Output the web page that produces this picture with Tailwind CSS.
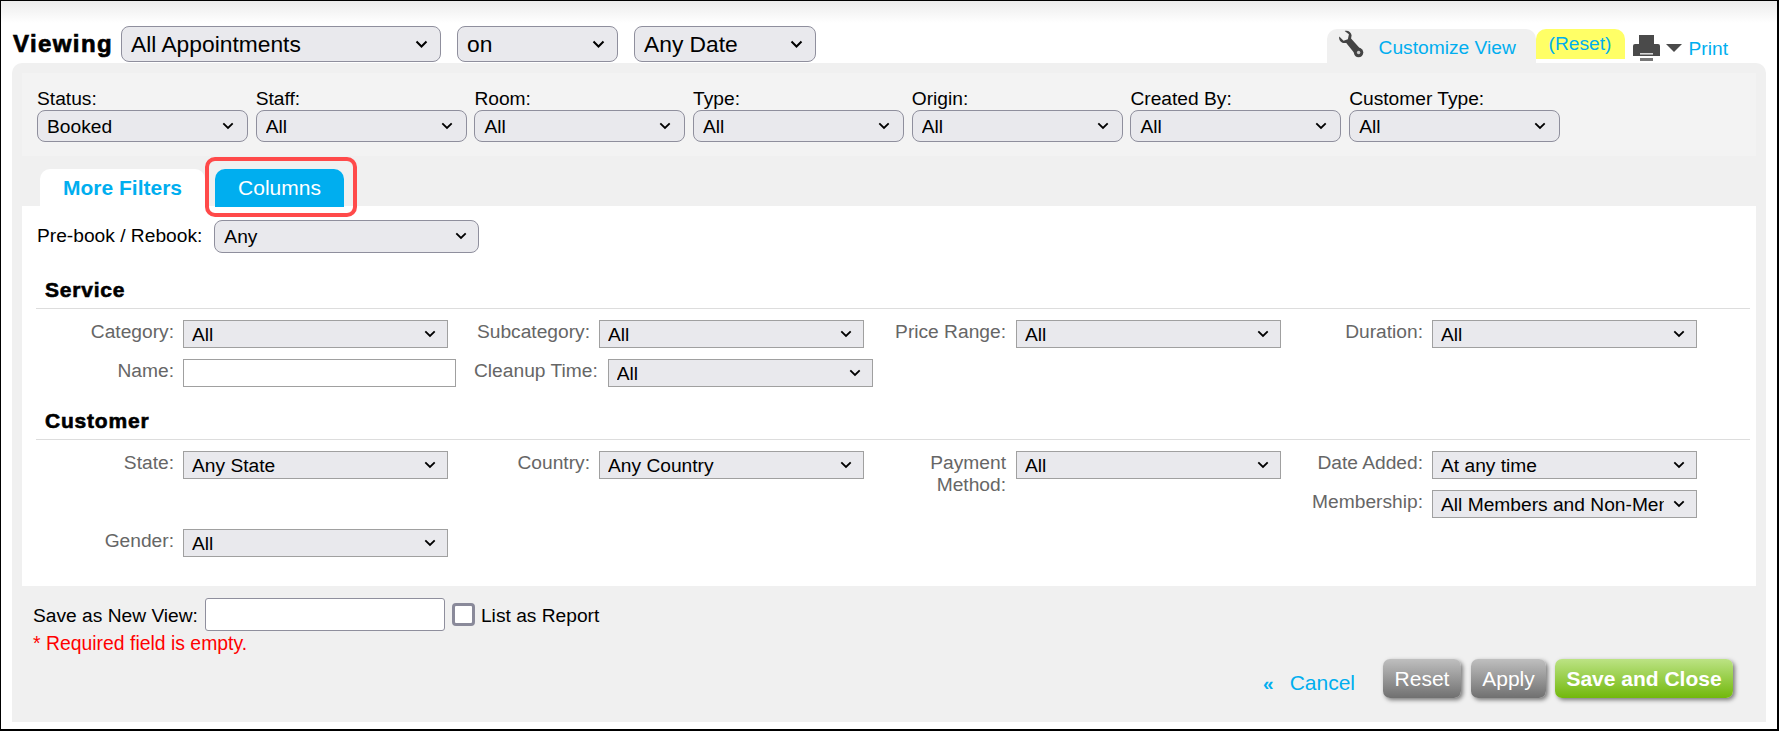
<!DOCTYPE html>
<html lang="en">

<head>
    <meta charset="utf-8" />
    <title>Customize View</title>
    <script src="https://cdn.jsdelivr.net/npm/@tailwindcss/browser@4"></script>
</head>

<body class="bg-white">
    <div class="relative w-[1779px] h-[731px] overflow-hidden flex flex-col border-t border-l border-r-2 border-b-2 border-black bg-[linear-gradient(#ececec,#ffffff_22px)] font-['Liberation_Sans',Arial,sans-serif] text-[19.2px] text-black">
        <!-- Header -->
        <div class="flex justify-between items-end h-[62px] shrink-0 pl-[12px]">
            <div class="flex items-center mb-[1px]">
                <span class="w-[108px] text-[24px] font-bold tracking-[1.4px] [-webkit-text-stroke:0.7px_black]">Viewing</span>
                <span class="relative block w-[320px] h-[36px]"><select class="appearance-none w-full h-full pl-[9px] text-[22.8px] bg-[#e9e9ed] border border-[#8f8f9d] rounded-[8px]"><option>All Appointments</option></select><svg class="absolute right-[13px] top-[14px] w-[13px] h-[9px] pointer-events-none" viewBox="0 0 13 9"><path d="M1.5 1.5l5 5 5-5" fill="none" stroke="#000" stroke-width="2" /></svg></span>
                <span class="relative block w-[161px] h-[36px] ml-[16px]"><select class="appearance-none w-full h-full pl-[9px] text-[22.8px] bg-[#e9e9ed] border border-[#8f8f9d] rounded-[8px]"><option>on</option></select><svg class="absolute right-[13px] top-[14px] w-[13px] h-[9px] pointer-events-none" viewBox="0 0 13 9"><path d="M1.5 1.5l5 5 5-5" fill="none" stroke="#000" stroke-width="2" /></svg></span>
                <span class="relative block w-[182px] h-[36px] ml-[16px]"><select class="appearance-none w-full h-full pl-[9px] text-[22.8px] bg-[#e9e9ed] border border-[#8f8f9d] rounded-[8px]"><option>Any Date</option></select><svg class="absolute right-[13px] top-[14px] w-[13px] h-[9px] pointer-events-none" viewBox="0 0 13 9"><path d="M1.5 1.5l5 5 5-5" fill="none" stroke="#000" stroke-width="2" /></svg></span>
            </div>
            <div class="flex items-end mr-[49px]">
                <a class="flex items-center w-[209px] h-[34px] pl-[9px] bg-[#f0f0f0] rounded-t-[10px] text-[#00aeef]">
                    <svg class="w-[28px] h-[29px] mt-[-3px]" viewBox="0 0 26 27">
                        <path d="M3 6 L7 10 L11 8.5 L12 4 L8 1 C11 0 14 2 14.5 5 L14 8 L24 19 L22 23.5 L19 24 L9.5 12 C6 13 2 10 3 6 Z" fill="#444" />
                        <circle cx="21" cy="21" r="4.4" fill="#444" />
                        <circle cx="21" cy="21" r="1.6" fill="#ccc" />
                    </svg>
                    <span class="ml-[15px] mt-[5px]">Customize View</span>
                </a>
                <a class="w-[89px] h-[30px] mb-[4px] pt-[3px] text-center leading-[24px] bg-[#ffff66] rounded-t-[10px] text-[#00aeef]">(Reset)</a>
                <div class="flex items-center h-[28px] mb-[1px] ml-[8px] text-[#00aeef]">
                    <svg class="w-[27px] h-[26px]" viewBox="0 0 27 26">
                        <rect x="6" y="0" width="15" height="10" fill="#4a4a4a" />
                        <path d="M2 9 H25 Q27 9 27 11 V21 H0 V11 Q0 9 2 9 Z" fill="#4a4a4a" />
                        <rect x="7" y="18" width="13" height="1.6" fill="#d8d8d8" />
                        <rect x="7" y="23" width="13" height="3" fill="#777" />
                    </svg>
                    <svg class="w-[16px] h-[8px] ml-[6px]" viewBox="0 0 16 8">
                        <path d="M0 0 H16 L8 8 Z" fill="#4a4a4a" />
                    </svg>
                    <span class="ml-[7px] mt-[3px]">Print</span>
                </div>
            </div>
        </div>

        <!-- Panel -->
        <div class="flex-1 ml-[11px] mr-[11px] mb-[7px] flex flex-col bg-[#f0f0f0] rounded-t-[10px] pt-[10px]">
            <!-- Quick filters -->
            <div class="mx-[10px] h-[83px] pt-[16px] pl-[15px] flex gap-[7.7px] bg-[#f3f3f3]">
                <label class="w-[211px] leading-[20px]">Status:<span class="relative block h-[32px] mt-[1px]"><select class="appearance-none w-full h-full pl-[9px] pt-[1px] bg-[#e9e9ed] border border-[#8f8f9d] rounded-[8px]"><option>Booked</option></select><svg class="absolute right-[14px] top-[12px] w-[12px] h-[8px] pointer-events-none" viewBox="0 0 12 8"><path d="M1.3 1.3l4.7 4.7 4.7-4.7" fill="none" stroke="#000" stroke-width="1.8" /></svg></span></label>
                <label class="w-[211px] leading-[20px]">Staff:<span class="relative block h-[32px] mt-[1px]"><select class="appearance-none w-full h-full pl-[9px] pt-[1px] bg-[#e9e9ed] border border-[#8f8f9d] rounded-[8px]"><option>All</option></select><svg class="absolute right-[14px] top-[12px] w-[12px] h-[8px] pointer-events-none" viewBox="0 0 12 8"><path d="M1.3 1.3l4.7 4.7 4.7-4.7" fill="none" stroke="#000" stroke-width="1.8" /></svg></span></label>
                <label class="w-[211px] leading-[20px]">Room:<span class="relative block h-[32px] mt-[1px]"><select class="appearance-none w-full h-full pl-[9px] pt-[1px] bg-[#e9e9ed] border border-[#8f8f9d] rounded-[8px]"><option>All</option></select><svg class="absolute right-[14px] top-[12px] w-[12px] h-[8px] pointer-events-none" viewBox="0 0 12 8"><path d="M1.3 1.3l4.7 4.7 4.7-4.7" fill="none" stroke="#000" stroke-width="1.8" /></svg></span></label>
                <label class="w-[211px] leading-[20px]">Type:<span class="relative block h-[32px] mt-[1px]"><select class="appearance-none w-full h-full pl-[9px] pt-[1px] bg-[#e9e9ed] border border-[#8f8f9d] rounded-[8px]"><option>All</option></select><svg class="absolute right-[14px] top-[12px] w-[12px] h-[8px] pointer-events-none" viewBox="0 0 12 8"><path d="M1.3 1.3l4.7 4.7 4.7-4.7" fill="none" stroke="#000" stroke-width="1.8" /></svg></span></label>
                <label class="w-[211px] leading-[20px]">Origin:<span class="relative block h-[32px] mt-[1px]"><select class="appearance-none w-full h-full pl-[9px] pt-[1px] bg-[#e9e9ed] border border-[#8f8f9d] rounded-[8px]"><option>All</option></select><svg class="absolute right-[14px] top-[12px] w-[12px] h-[8px] pointer-events-none" viewBox="0 0 12 8"><path d="M1.3 1.3l4.7 4.7 4.7-4.7" fill="none" stroke="#000" stroke-width="1.8" /></svg></span></label>
                <label class="w-[211px] leading-[20px]">Created By:<span class="relative block h-[32px] mt-[1px]"><select class="appearance-none w-full h-full pl-[9px] pt-[1px] bg-[#e9e9ed] border border-[#8f8f9d] rounded-[8px]"><option>All</option></select><svg class="absolute right-[14px] top-[12px] w-[12px] h-[8px] pointer-events-none" viewBox="0 0 12 8"><path d="M1.3 1.3l4.7 4.7 4.7-4.7" fill="none" stroke="#000" stroke-width="1.8" /></svg></span></label>
                <label class="w-[211px] leading-[20px]">Customer Type:<span class="relative block h-[32px] mt-[1px]"><select class="appearance-none w-full h-full pl-[9px] pt-[1px] bg-[#e9e9ed] border border-[#8f8f9d] rounded-[8px]"><option>All</option></select><svg class="absolute right-[14px] top-[12px] w-[12px] h-[8px] pointer-events-none" viewBox="0 0 12 8"><path d="M1.3 1.3l4.7 4.7 4.7-4.7" fill="none" stroke="#000" stroke-width="1.8" /></svg></span></label>
            </div>

            <!-- Tabs -->
            <div class="flex mt-[13px] ml-[28px] h-[37px] text-[21px]">
                <a class="w-[165px] h-[37px] leading-[38px] text-center font-bold bg-white rounded-t-[10px] text-[#00aeef]">More Filters</a>
                <div class="relative ml-[10px] z-10">
                    <a class="block w-[129px] h-[38px] leading-[38px] text-center bg-[#00aeef] text-white rounded-t-[10px]">Columns</a>
                    <div class="absolute left-[-10px] top-[-12px] w-[152px] h-[60px] border-[4.5px] border-[#ff4a4a] rounded-[10px]"></div>
                </div>
            </div>

            <!-- More filters -->
            <div class="mx-[10px] h-[380px] bg-white pt-[14px] text-[#666]">
                <div class="flex items-center pl-[15px] text-black">
                    <span>Pre-book / Rebook:</span>
                    <span class="relative block w-[265px] h-[33px] ml-[12px]"><select class="appearance-none w-full h-full pl-[9px] pt-[1px] bg-[#e9e9ed] border border-[#8f8f9d] rounded-[8px]"><option>Any</option></select><svg class="absolute right-[12px] top-[12px] w-[12px] h-[8px] pointer-events-none" viewBox="0 0 12 8"><path d="M1.3 1.3l4.7 4.7 4.7-4.7" fill="none" stroke="#000" stroke-width="1.8" /></svg></span>
                </div>

                <h3 class="mt-[23px] ml-[14px] mr-[6px] h-[33px] pl-[9px] leading-[28px] text-[21px] font-bold tracking-[0.8px] text-black [-webkit-text-stroke:0.6px_black] border-b border-[#ddd]">Service</h3>
                <div class="flex mt-[11px] pl-[10px] leading-[22px] h-[28px]">
                    <label class="flex w-[416px]"><span class="w-[142px] pt-[1px] text-right">Category:</span><span class="relative block w-[265px] ml-[9px]"><select class="appearance-none w-full h-full pl-[8px] pt-[1px] text-black bg-[#e9e9ed] border border-[#a0a0a0]"><option>All</option></select><svg class="absolute right-[12px] top-[10px] w-[12px] h-[8px] pointer-events-none" viewBox="0 0 12 8"><path d="M1.3 1.3l4.7 4.7 4.7-4.7" fill="none" stroke="#000" stroke-width="1.8" /></svg></span></label>
                    <label class="flex w-[416px]"><span class="w-[142px] pt-[1px] text-right">Subcategory:</span><span class="relative block w-[265px] ml-[9px]"><select class="appearance-none w-full h-full pl-[8px] pt-[1px] text-black bg-[#e9e9ed] border border-[#a0a0a0]"><option>All</option></select><svg class="absolute right-[12px] top-[10px] w-[12px] h-[8px] pointer-events-none" viewBox="0 0 12 8"><path d="M1.3 1.3l4.7 4.7 4.7-4.7" fill="none" stroke="#000" stroke-width="1.8" /></svg></span></label>
                    <label class="flex w-[417px]"><span class="w-[142px] pt-[1px] text-right">Price Range:</span><span class="relative block w-[265px] ml-[10px]"><select class="appearance-none w-full h-full pl-[8px] pt-[1px] text-black bg-[#e9e9ed] border border-[#a0a0a0]"><option>All</option></select><svg class="absolute right-[12px] top-[10px] w-[12px] h-[8px] pointer-events-none" viewBox="0 0 12 8"><path d="M1.3 1.3l4.7 4.7 4.7-4.7" fill="none" stroke="#000" stroke-width="1.8" /></svg></span></label>
                    <label class="flex w-[416px]"><span class="w-[142px] pt-[1px] text-right">Duration:</span><span class="relative block w-[265px] ml-[9px]"><select class="appearance-none w-full h-full pl-[8px] pt-[1px] text-black bg-[#e9e9ed] border border-[#a0a0a0]"><option>All</option></select><svg class="absolute right-[12px] top-[10px] w-[12px] h-[8px] pointer-events-none" viewBox="0 0 12 8"><path d="M1.3 1.3l4.7 4.7 4.7-4.7" fill="none" stroke="#000" stroke-width="1.8" /></svg></span></label>
                </div>
                <div class="flex mt-[11px] pl-[10px] leading-[22px] h-[28px]">
                    <label class="flex"><span class="w-[142px] pt-[1px] text-right">Name:</span><input type="text" class="w-[273px] ml-[9px] bg-white border border-[#a0a0a0]" /></label>
                    <label class="flex ml-[18px]"><span class="pt-[1px]">Cleanup Time:</span><span class="relative block w-[265px] ml-[10px]"><select class="appearance-none w-full h-full pl-[8px] pt-[1px] text-black bg-[#e9e9ed] border border-[#a0a0a0]"><option>All</option></select><svg class="absolute right-[12px] top-[10px] w-[12px] h-[8px] pointer-events-none" viewBox="0 0 12 8"><path d="M1.3 1.3l4.7 4.7 4.7-4.7" fill="none" stroke="#000" stroke-width="1.8" /></svg></span></label>
                </div>

                <h3 class="mt-[20px] ml-[14px] mr-[6px] h-[33px] pl-[9px] leading-[28px] text-[21px] font-bold tracking-[0.8px] text-black [-webkit-text-stroke:0.6px_black] border-b border-[#ddd]">Customer</h3>
                <div class="flex mt-[11px] pl-[10px] leading-[22px]">
                    <label class="flex w-[416px] h-[28px]"><span class="w-[142px] pt-[1px] text-right">State:</span><span class="relative block w-[265px] ml-[9px]"><select class="appearance-none w-full h-full pl-[8px] pt-[1px] text-black bg-[#e9e9ed] border border-[#a0a0a0]"><option>Any State</option></select><svg class="absolute right-[12px] top-[10px] w-[12px] h-[8px] pointer-events-none" viewBox="0 0 12 8"><path d="M1.3 1.3l4.7 4.7 4.7-4.7" fill="none" stroke="#000" stroke-width="1.8" /></svg></span></label>
                    <label class="flex w-[416px] h-[28px]"><span class="w-[142px] pt-[1px] text-right">Country:</span><span class="relative block w-[265px] ml-[9px]"><select class="appearance-none w-full h-full pl-[8px] pt-[1px] text-black bg-[#e9e9ed] border border-[#a0a0a0]"><option>Any Country</option></select><svg class="absolute right-[12px] top-[10px] w-[12px] h-[8px] pointer-events-none" viewBox="0 0 12 8"><path d="M1.3 1.3l4.7 4.7 4.7-4.7" fill="none" stroke="#000" stroke-width="1.8" /></svg></span></label>
                    <label class="flex w-[417px] h-[28px]"><span class="w-[142px] pt-[1px] text-right">Payment<br />Method:</span><span class="relative block w-[265px] ml-[10px]"><select class="appearance-none w-full h-full pl-[8px] pt-[1px] text-black bg-[#e9e9ed] border border-[#a0a0a0]"><option>All</option></select><svg class="absolute right-[12px] top-[10px] w-[12px] h-[8px] pointer-events-none" viewBox="0 0 12 8"><path d="M1.3 1.3l4.7 4.7 4.7-4.7" fill="none" stroke="#000" stroke-width="1.8" /></svg></span></label>
                    <div class="w-[416px]">
                        <label class="flex h-[28px]"><span class="w-[142px] pt-[1px] text-right">Date Added:</span><span class="relative block w-[265px] ml-[9px]"><select class="appearance-none w-full h-full pl-[8px] pt-[1px] text-black bg-[#e9e9ed] border border-[#a0a0a0]"><option>At any time</option></select><svg class="absolute right-[12px] top-[10px] w-[12px] h-[8px] pointer-events-none" viewBox="0 0 12 8"><path d="M1.3 1.3l4.7 4.7 4.7-4.7" fill="none" stroke="#000" stroke-width="1.8" /></svg></span></label>
                        <label class="flex h-[28px] mt-[11px]"><span class="w-[142px] pt-[1px] text-right">Membership:</span><span class="relative block w-[265px] ml-[9px]"><select class="appearance-none w-full h-full pl-[8px] pt-[1px] pr-[32px] text-black bg-[#e9e9ed] border border-[#a0a0a0]"><option>All Members and Non-Members</option></select><svg class="absolute right-[12px] top-[10px] w-[12px] h-[8px] pointer-events-none" viewBox="0 0 12 8"><path d="M1.3 1.3l4.7 4.7 4.7-4.7" fill="none" stroke="#000" stroke-width="1.8" /></svg></span></label>
                    </div>
                </div>
                <div class="flex mt-[11px] pl-[10px] leading-[22px] h-[28px]">
                    <label class="flex w-[416px]"><span class="w-[142px] pt-[1px] text-right">Gender:</span><span class="relative block w-[265px] ml-[9px]"><select class="appearance-none w-full h-full pl-[8px] pt-[1px] text-black bg-[#e9e9ed] border border-[#a0a0a0]"><option>All</option></select><svg class="absolute right-[12px] top-[10px] w-[12px] h-[8px] pointer-events-none" viewBox="0 0 12 8"><path d="M1.3 1.3l4.7 4.7 4.7-4.7" fill="none" stroke="#000" stroke-width="1.8" /></svg></span></label>
                </div>
            </div>

            <!-- Save -->
            <div class="flex items-center mt-[12px] ml-[21px]">
                <span class="pt-[3px]">Save as New View:</span>
                <input type="text" class="w-[240px] h-[33px] ml-[7px] bg-white border border-[#8f8f9d] rounded-[3px]" />
                <input type="checkbox" class="appearance-none w-[23px] h-[23px] ml-[7px] bg-white border-[3px] border-[#8a8a9a] rounded-[4px]" />
                <span class="ml-[6px] pt-[3px]">List as Report</span>
            </div>
            <p class="mt-[2px] ml-[21px] leading-[20px] text-[19.4px] text-[#ff0000]">* Required field is empty.</p>

            <!-- Actions -->
            <div class="flex justify-end items-start mt-[6px] mr-[33px] text-[21px] text-white">
                <a class="mt-[12px] mr-[28px] leading-[24px] text-[#00aeef]"><span class="mr-[16px] font-bold text-[19px]">«</span>Cancel</a>
                <button class="w-[78px] h-[39px] rounded-[7px] bg-[linear-gradient(#bfbfbf,#707070)] shadow-[2px_2px_4px_rgba(0,0,0,0.5)]">Reset</button>
                <button class="w-[75px] h-[39px] ml-[10px] rounded-[7px] bg-[linear-gradient(#bfbfbf,#707070)] shadow-[2px_2px_4px_rgba(0,0,0,0.5)]">Apply</button>
                <button class="w-[178px] h-[39px] ml-[9px] rounded-[7px] font-bold bg-[linear-gradient(#bce384,#72b80c)] shadow-[2px_2px_4px_rgba(0,0,0,0.5)]">Save and Close</button>
            </div>
        </div>
    </div>
</body>

</html>
